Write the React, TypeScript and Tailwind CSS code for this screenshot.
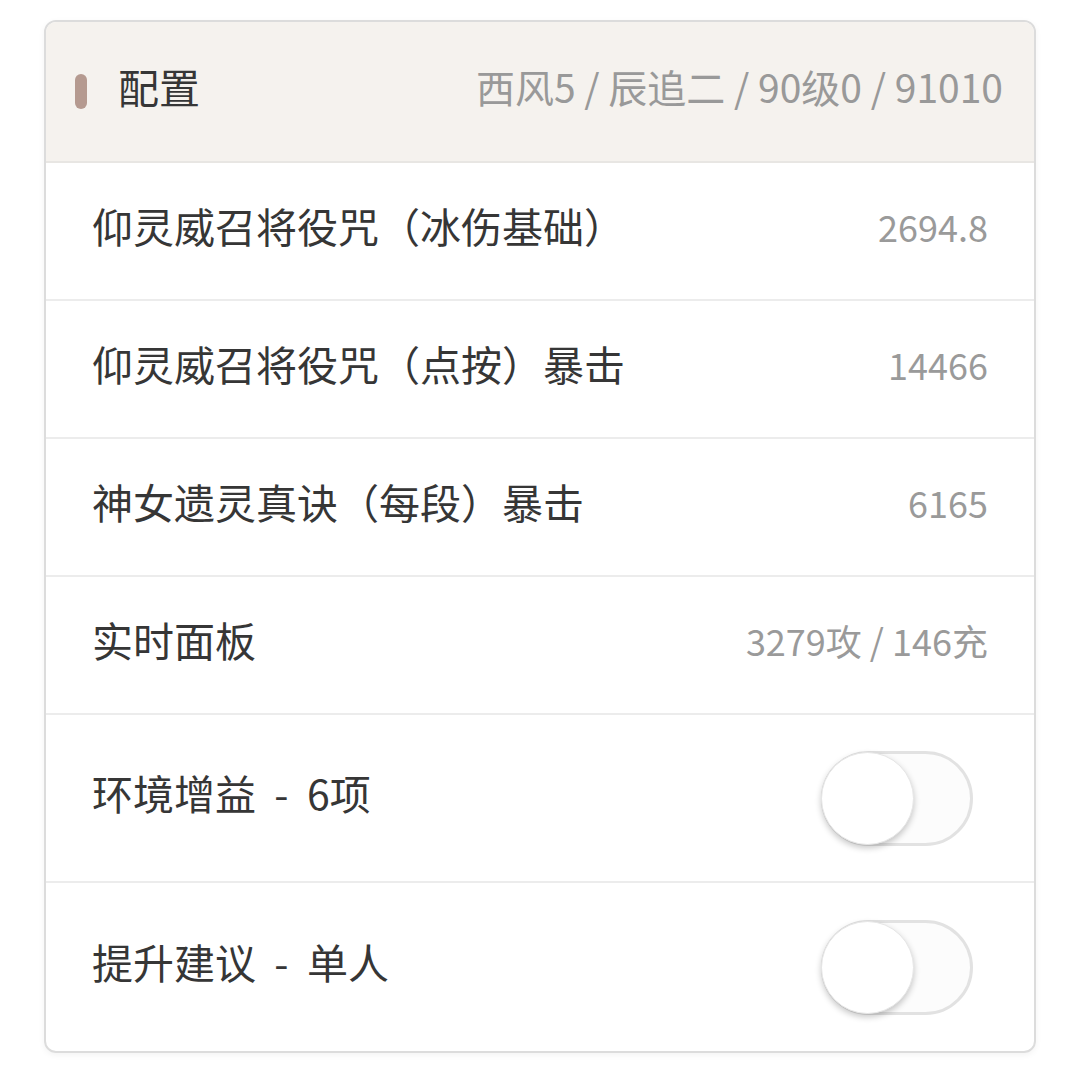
import React from 'react';

const rows = [
  { label: '仰灵威召将役咒（冰伤基础）', value: '2694.8' },
  { label: '仰灵威召将役咒（点按）暴击', value: '14466' },
  { label: '神女遗灵真诀（每段）暴击', value: '6165' },
  { label: '实时面板', value: '3279攻 / 146充' },
];

const toggles = ['环境增益 - 6项', '提升建议 - 单人'];

function Toggle() {
  return (
    <div className="relative w-[152px] h-[95px] rounded-full border-[3px] border-[#e2e2e2] bg-[#fcfcfc]">
      <div className="absolute -left-[3px] -top-[2px] w-[93px] h-[93px] rounded-full bg-white shadow-[0_3px_6px_rgba(0,0,0,0.22)] border border-[#e6e6e6]" />
    </div>
  );
}

export default function App() {
  return (
    <div
      className="w-[1080px] h-[1069px] bg-white pt-[20px] px-[44px]"
      style={{ fontFamily: '"Noto Sans CJK SC", "Noto Sans", sans-serif' }}
    >
      <div className="w-[992px] rounded-[12px] border-2 border-[#dcdcdc] overflow-hidden shadow-[0_2px_6px_rgba(0,0,0,0.05)]">
        <div className="h-[141px] bg-[#f5f2ee] border-b-2 border-[#e8e6e3] flex items-center pl-[29px] pr-[31px]">
          <div className="w-[12px] h-[35px] rounded-full bg-[#b59a90]" />
          <div className="ml-[31px] mb-[10px] text-[41px] text-[#363636]">配置</div>
          <div className="ml-auto mb-[10px] text-[39px] text-[#999999]">西风5 / 辰追二 / 90级0 / 91010</div>
        </div>
        {rows.map((r) => (
          <div
            key={r.label}
            className="h-[138px] flex items-center pl-[46px] pr-[46px] border-b-2 border-[#ececec]"
          >
            <div className="mb-[10px] text-[41px] text-[#363636]">{r.label}</div>
            <div className="ml-auto mb-[10px] text-[36px] text-[#9a9a9a]">{r.value}</div>
          </div>
        ))}
        {toggles.map((t, i) => (
          <div
            key={t}
            className={`h-[168px] flex items-center pl-[46px] pr-[61px] ${i === 0 ? 'border-b-2 border-[#ececec]' : ''}`}
          >
            <div className="mb-[10px] text-[41px] text-[#363636] whitespace-pre">{t.replace(' - ', '  -  ')}</div>
            <div className="ml-auto">
              <Toggle />
            </div>
          </div>
        ))}
      </div>
    </div>
  );
}
